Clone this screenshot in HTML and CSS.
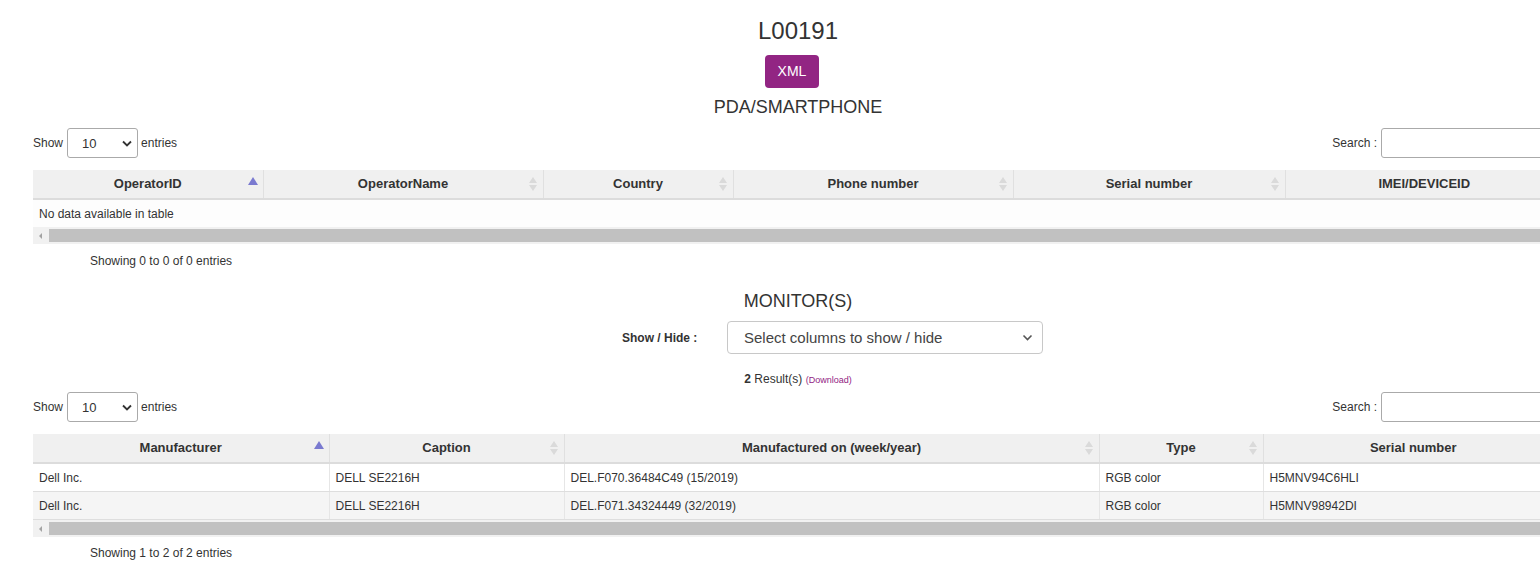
FILE: index.html
```html
<!DOCTYPE html>
<html>

	<head>
		<meta charset="UTF-8">
		<title>L00191</title>
		<link rel="stylesheet" href="styles.css">
	</head>

	<body>
		<div class="page">
			<h1 class="title">L00191</h1>
			<div class="center">
				<a href="javascript:;" class="btn-xml">XML</a>
			</div>
			<h2 class="section">PDA/SMARTPHONE</h2>

			<div class="toolbar">
				<label class="length">Show
					<span class="select-sm">10<svg width="10" height="7" viewBox="0 0 10 7"><path d="M1 1.5 L5 5.5 L9 1.5" fill="none" stroke="#333" stroke-width="1.8"/></svg></span>
					entries</label>
				<label class="search">Search : <span class="input"></span></label>
			</div>
			<table class="grid">
				<colgroup>
					<col style="width:230px">
					<col style="width:280px">
					<col style="width:190px">
					<col style="width:280px">
					<col style="width:272px">
					<col>
				</colgroup>
				<thead>
					<tr>
						<th class="asc">OperatorID</th>
						<th class="sort">OperatorName</th>
						<th class="sort">Country</th>
						<th class="sort">Phone number</th>
						<th class="sort">Serial number</th>
						<th>IMEI/DEVICEID</th>
					</tr>
				</thead>
				<tbody>
					<tr class="empty">
						<td colspan="6">No data available in table</td>
					</tr>
				</tbody>
			</table>
			<div class="hscroll"><span class="arrow-left"></span><span class="thumb"></span></div>
			<div class="info">Showing 0 to 0 of 0 entries</div>

			<h2 class="section monitors">MONITOR(S)</h2>
			<div class="colpick">
				<span class="colpick-label">Show / Hide :</span>
				<span class="select-lg">Select columns to show / hide<svg width="11" height="7" viewBox="0 0 11 7"><path d="M1.5 1.5 L5.5 5.5 L9.5 1.5" fill="none" stroke="#555" stroke-width="1.6"/></svg></span>
			</div>
			<div class="results"><b>2</b> Result(s) <a href="javascript:;">(Download)</a></div>

			<div class="toolbar toolbar2">
				<label class="length">Show
					<span class="select-sm">10<svg width="10" height="7" viewBox="0 0 10 7"><path d="M1 1.5 L5 5.5 L9 1.5" fill="none" stroke="#333" stroke-width="1.8"/></svg></span>
					entries</label>
				<label class="search">Search : <span class="input"></span></label>
			</div>
			<table class="grid">
				<colgroup>
					<col style="width:296px">
					<col style="width:235px">
					<col style="width:535px">
					<col style="width:164px">
					<col>
				</colgroup>
				<thead>
					<tr>
						<th class="asc">Manufacturer</th>
						<th class="sort">Caption</th>
						<th class="sort">Manufactured on (week/year)</th>
						<th class="sort">Type</th>
						<th>Serial number</th>
					</tr>
				</thead>
				<tbody>
					<tr>
						<td>Dell Inc.</td>
						<td>DELL SE2216H</td>
						<td>DEL.F070.36484C49 (15/2019)</td>
						<td>RGB color</td>
						<td>H5MNV94C6HLI</td>
					</tr>
					<tr class="odd">
						<td>Dell Inc.</td>
						<td>DELL SE2216H</td>
						<td>DEL.F071.34324449 (32/2019)</td>
						<td>RGB color</td>
						<td>H5MNV98942DI</td>
					</tr>
				</tbody>
			</table>
			<div class="hscroll"><span class="arrow-left"></span><span class="thumb"></span></div>
			<div class="info info2">Showing 1 to 2 of 2 entries</div>
		</div>
	</body>

</html>
```

FILE: styles.css
```css
html,
body {
	margin: 0;
	overflow: hidden;
	background: #fff;
}

body {
	font-family: "Liberation Sans", Arial, sans-serif;
	color: #333;
}

.page {
	width: 1530px;
	margin-left: 33px;
}

.title {
	margin: 17px 0 0;
	font-size: 24px;
	line-height: 28px;
	font-weight: normal;
	text-align: center;
}

.center {
	display: flex;
	justify-content: center;
	margin-top: 10px;
}

.btn-xml {
	display: block;
	width: 54px;
	height: 33px;
	line-height: 33px;
	margin-left: -12px;
	text-align: center;
	background: #922583;
	color: #fff;
	font-size: 14px;
	text-decoration: none;
	border-radius: 4px;
}

.section {
	margin: 8px 0 0;
	font-size: 18px;
	line-height: 22px;
	font-weight: normal;
	text-align: center;
}

.toolbar {
	display: flex;
	justify-content: space-between;
	align-items: center;
	height: 30px;
	margin-top: 10px;
	font-size: 12px;
}

.toolbar label {
	display: flex;
	align-items: center;
}

.select-sm {
	display: flex;
	align-items: center;
	justify-content: space-between;
	box-sizing: border-box;
	width: 71px;
	height: 30px;
	margin: 0 3px 0 4px;
	padding: 0 5px 0 14px;
	border: 1px solid #aaa;
	border-radius: 3px;
	font-size: 13px;
	background: #fff;
}

.search .input {
	display: block;
	box-sizing: border-box;
	width: 182px;
	height: 30px;
	margin-left: 4px;
	border: 1px solid #aaa;
	border-radius: 3px;
}

.grid {
	width: 1530px;
	margin-top: 12px;
	border-collapse: collapse;
	table-layout: fixed;
}

.grid th {
	position: relative;
	height: 27px;
	padding: 0 0 1px;
	background: #f0f0f0;
	border-left: 1px solid #e0e0e0;
	border-bottom: 2px solid #dcdcdc;
	font-size: 13px;
	font-weight: bold;
	text-align: center;
}

.grid th:first-child,
.grid td:first-child {
	border-left: none;
}

.grid th.asc::after {
	content: "";
	position: absolute;
	right: 5px;
	top: 7px;
	border-left: 5px solid transparent;
	border-right: 5px solid transparent;
	border-bottom: 8px solid #7a7ad0;
}

.grid th.sort::before,
.grid th.sort::after {
	content: "";
	position: absolute;
	right: 6px;
	border-left: 4px solid transparent;
	border-right: 4px solid transparent;
}

.grid th.sort::before {
	top: 7px;
	border-bottom: 6px solid #dadada;
}

.grid th.sort::after {
	top: 15px;
	border-top: 6px solid #dadada;
}

.grid td {
	height: 27px;
	padding: 0 6px;
	font-size: 12px;
	border-left: 1px solid #e6e6e6;
	border-bottom: 1px solid #dedede;
	background: #fff;
	white-space: nowrap;
	overflow: hidden;
}

.grid tr.odd td {
	background: #f5f5f5;
}

.grid tr.empty td {
	background: #fdfdfd;
	border-bottom: none;
}

.hscroll {
	display: flex;
	align-items: center;
	height: 17px;
	background: #f1f1f1;
}

.arrow-left {
	width: 0;
	height: 0;
	margin: 0 5px 0 6px;
	border-top: 3px solid transparent;
	border-bottom: 3px solid transparent;
	border-right: 3px solid #a3a3a3;
}

.thumb {
	flex: 1;
	height: 13px;
	margin-left: 2px;
	background: #c1c1c1;
}

.info {
	margin: 9px 0 0 57px;
	font-size: 12px;
	line-height: 16px;
}

.info2 {
	margin-top: 8px;
}

.monitors {
	margin-top: 21px;
}

.colpick {
	display: flex;
	align-items: center;
	margin: 9px 0 0 589px;
}

.colpick-label {
	width: 105px;
	font-size: 12px;
	font-weight: bold;
}

.select-lg {
	display: flex;
	align-items: center;
	justify-content: space-between;
	box-sizing: border-box;
	width: 316px;
	height: 33px;
	padding: 0 9px 0 16px;
	border: 1px solid #c8c8c8;
	border-radius: 4px;
	font-size: 15px;
	color: #444;
}

.results {
	margin-top: 17px;
	font-size: 12px;
	line-height: 16px;
	text-align: center;
}

.results a {
	font-size: 9px;
	color: #922583;
	text-decoration: none;
}

.toolbar2 {
	margin-top: 4px;
}
```
